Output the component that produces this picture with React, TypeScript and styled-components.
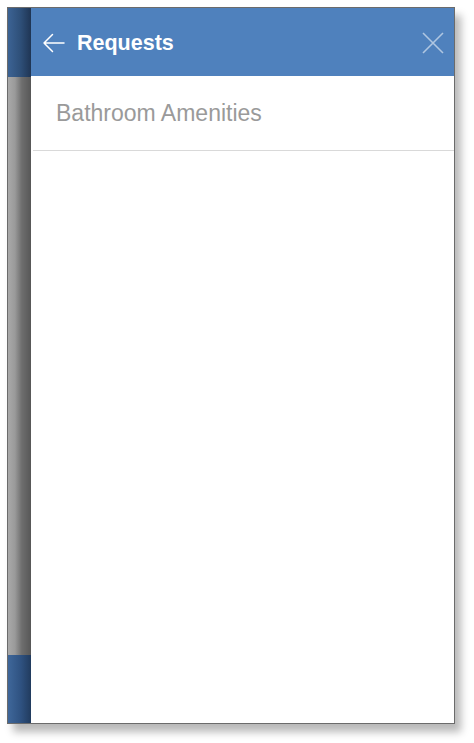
import styled, { createGlobalStyle } from 'styled-components'

const GlobalStyle = createGlobalStyle`
  html, body {
    margin: 0;
    padding: 0;
    background: #ffffff;
    font-family: "Liberation Sans", Arial, sans-serif;
  }
`

export default function App() {
  return (
    <>
      <GlobalStyle />
      <Stage>
        <Frame>
          <Strip>
            <StripTop />
            <StripMiddle />
            <StripBottom />
          </Strip>
          <Panel>
            <Header>
              <BackButton aria-label="back">
                <svg width="24" height="20" viewBox="0 0 24 20" fill="none">
                  <path d="M22 10H2M10.5 1.5L2 10l8.5 8.5" stroke="#fff" strokeWidth="1.5" strokeLinecap="round" strokeLinejoin="round" />
                </svg>
              </BackButton>
              <Title>Requests</Title>
              <CloseButton aria-label="close">
                <svg width="22" height="22" viewBox="0 0 22 22" fill="none">
                  <path d="M1 1l20 20M21 1L1 21" stroke="rgba(255,255,255,0.55)" strokeWidth="1.6" />
                </svg>
              </CloseButton>
            </Header>
            <List>
              <Item>Bathroom Amenities</Item>
            </List>
          </Panel>
        </Frame>
      </Stage>
    </>
  )
}

const Stage = styled.div`
  width: 474px;
  height: 743px;
  padding: 7px 0 0 7px;
  box-sizing: border-box;
`

const Frame = styled.div`
  width: 448px;
  height: 717px;
  box-sizing: border-box;
  border: 1px solid #6b6b6b;
  display: flex;
  background: #fff;
  box-shadow: 6px 8px 8px rgba(0, 0, 0, 0.28);
`

const Strip = styled.div`
  width: 23px;
  display: flex;
  flex-direction: column;
`

const StripTop = styled.div`
  height: 69px;
  background: linear-gradient(to right, #3c6394 0%, #2e4f78 55%, #1f3554 100%);
`

const StripMiddle = styled.div`
  flex: 1;
  background: linear-gradient(to right, #a9a9a9 0%, #9a9a9a 30%, #6e6e6e 60%, #575757 100%);
`

const StripBottom = styled.div`
  height: 68px;
  background: linear-gradient(to right, #3f679a 0%, #2f5281 55%, #213b5e 100%);
`

const Panel = styled.div`
  flex: 1;
  display: flex;
  flex-direction: column;
  background: #fff;
`

const Header = styled.div`
  height: 68px;
  background: #4f81bd;
  display: flex;
  align-items: center;
  padding: 3px 10px 0 11px;
  box-sizing: border-box;
  gap: 11px;
`

const BackButton = styled.div`
  display: flex;
  align-items: center;
  margin-top: -2px;
`

const Title = styled.div`
  flex: 1;
  color: #fff;
  font-size: 21.5px;
  font-weight: bold;
`

const CloseButton = styled.div`
  display: flex;
  align-items: center;
  margin-top: -2px;
`

const List = styled.div`
  display: flex;
  flex-direction: column;
`

const Item = styled.div`
  height: 75px;
  box-sizing: border-box;
  display: flex;
  align-items: center;
  padding-left: 23px;
  border-bottom: 1px solid #d9d9d9;
  color: #9a9a9a;
  font-size: 23px;
  margin-left: 2px;
`
